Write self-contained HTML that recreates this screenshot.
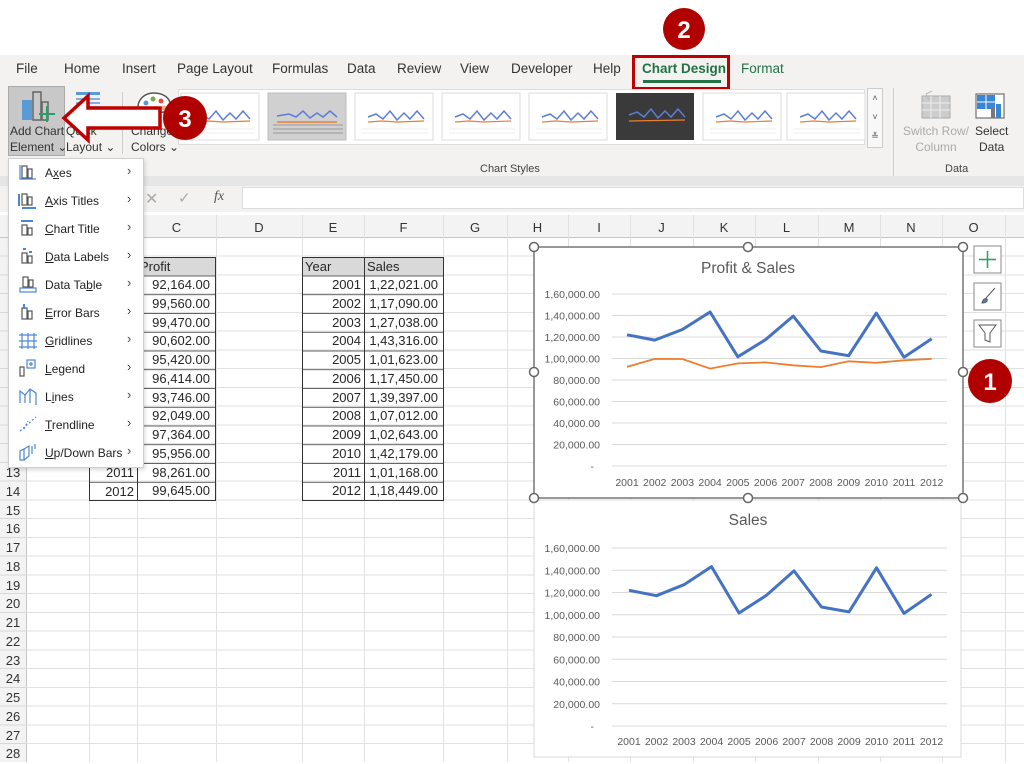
<!DOCTYPE html>
<html><head><meta charset="utf-8"><style>
*{margin:0;padding:0;box-sizing:border-box}
body{width:1024px;height:762px;overflow:hidden;background:#fff;font-family:"Liberation Sans",sans-serif;position:relative;font-size:13px;color:#262626}
.a{position:absolute}
.tab{position:absolute;top:61px;font-size:13.5px;color:#333}
.mi{position:absolute;left:45px;font-size:12px;color:#222}
.mi u{text-decoration:underline}
.ch{position:absolute;left:127px;font-size:13px;color:#444}
.hd{position:absolute;top:220px;font-size:13px;color:#333;text-align:center}
</style></head><body>
<div class="a" style="left:0;top:55px;width:1024px;height:123px;background:#f3f2f1"></div>
<div class="a" style="left:0;top:176px;width:1024px;height:10px;background:#e6e6e6"></div>
<div class="a" style="left:0;top:186px;width:1024px;height:26px;background:#f3f2f1"></div>
<div class="a" style="left:242px;top:187px;width:782px;height:22px;background:#fff;border:1px solid #ddd"></div>
<div class="a" style="left:145px;top:189px;font-size:16px;color:#aaa">✕</div>
<div class="a" style="left:178px;top:189px;font-size:15px;color:#aaa">✓</div>
<div class="a" style="left:214px;top:189px;font-size:14px;font-style:italic;font-family:'Liberation Serif',serif;color:#555">fx</div>
<div class="tab" style="left:16px">File</div>
<div class="tab" style="left:64px">Home</div>
<div class="tab" style="left:122px">Insert</div>
<div class="tab" style="left:177px">Page Layout</div>
<div class="tab" style="left:272px">Formulas</div>
<div class="tab" style="left:347px">Data</div>
<div class="tab" style="left:397px">Review</div>
<div class="tab" style="left:460px">View</div>
<div class="tab" style="left:511px">Developer</div>
<div class="tab" style="left:593px">Help</div>
<div class="tab" style="left:642px;color:#217346;font-weight:bold">Chart Design</div>
<div class="a" style="left:643px;top:80px;width:78px;height:3px;background:#217346"></div>
<div class="a" style="left:632px;top:55px;width:98px;height:35px;border:3px solid #c00000"></div>
<div class="tab" style="left:741px;color:#217346">Format</div>
<div class="a" style="left:8px;top:86px;width:57px;height:70px;background:#c8c8c8;border:1px solid #aaa"></div>
<svg class="a" style="left:20px;top:90px" width="36" height="34"><rect x="2" y="10" width="10" height="20" fill="#5b9bd5"/><rect x="13" y="2" width="8" height="28" fill="none" stroke="#666" stroke-width="1.5"/><rect x="22" y="12" width="6" height="18" fill="none" stroke="#666" stroke-width="1.5"/><path d="M27 16v16M19 24h16" stroke="#21a366" stroke-width="2"/></svg>
<div class="a" style="left:10px;top:123px;font-size:12px;line-height:16px;color:#333">Add Chart<br>Element ⌄</div>
<svg class="a" style="left:72px;top:90px" width="34" height="34"><rect x="4" y="2" width="24" height="3" fill="#5b9bd5"/><path d="M4 9h24M4 13h24M4 17h24M4 21h24M4 25h24M4 29h24" stroke="#5b9bd5" stroke-width="1.5"/><rect x="8" y="14" width="5" height="16" fill="#fff" stroke="#666"/><rect x="15" y="18" width="5" height="12" fill="#fff" stroke="#666"/></svg>
<div class="a" style="left:66px;top:123px;font-size:12px;line-height:16px;color:#333">Quick<br>Layout ⌄</div>
<div class="a" style="left:122px;top:92px;width:1px;height:62px;background:#ccc"></div>
<svg class="a" style="left:136px;top:90px" width="36" height="34"><path d="M18 3C8 3 2 10 2 17c0 8 8 13 14 13 3 0 4-2 3-4-1-3 2-5 5-4 5 1 10-2 10-8C34 8 27 3 18 3z" fill="#fff" stroke="#555" stroke-width="1.5"/><circle cx="10" cy="13" r="2.5" fill="#5b9bd5"/><circle cx="17" cy="9" r="2.5" fill="#70ad47"/><circle cx="25" cy="11" r="2.5" fill="#e84c3d"/><circle cx="28" cy="18" r="2.5" fill="#f4b183"/><circle cx="10" cy="21" r="2.5" fill="#7030a0"/></svg>
<div class="a" style="left:131px;top:123px;font-size:12px;line-height:16px;color:#333">Change<br>Colors ⌄</div>
<div class="a" style="left:178px;top:89px;width:687px;height:56px;background:#fff;border:1px solid #ddd"></div>
<svg class="a" style="left:178px;top:89px" width="690" height="56">
<g id="t"><rect x="3" y="4" width="78" height="47" fill="#fff" stroke="#ddd"/><polyline points="16,28 24,25 31,30 38,22 45,31 52,24 58,30 65,22 72,30" fill="none" stroke="#5b7fd6" stroke-width="1.5"/><polyline points="16,33 30,32 45,33 72,32" fill="none" stroke="#ed7d31" stroke-width="1.2"/><path d="M10 40h66M10 44h66" stroke="#eee"/></g>
<g transform="translate(87,0)"><rect x="3" y="4" width="78" height="47" fill="#d0d0d0" stroke="#bbb"/><path d="M8 36h70M8 40h70M8 44h70" stroke="#999"/><polyline points="12,27 24,25 31,28 38,22 45,29 52,24 58,28 65,22 72,28" fill="none" stroke="#5b7fd6" stroke-width="1.5"/><polyline points="12,33 72,33" stroke="#ed7d31" stroke-width="1.5"/></g>
<use href="#t" x="174"/><use href="#t" x="261"/><use href="#t" x="348"/>
<g transform="translate(435,0)"><rect x="3" y="4" width="78" height="47" fill="#3a3a3a"/><polyline points="16,26 24,23 31,28 38,20 45,29 52,22 58,28 65,20 72,28" fill="none" stroke="#5b7fd6" stroke-width="1.5"/><polyline points="16,32 72,31" stroke="#ed7d31" stroke-width="1.2"/></g>
<use href="#t" x="522"/><use href="#t" x="606"/>
</svg>
<div class="a" style="left:867px;top:88px;width:16px;height:60px;border:1px solid #ccc;background:#f8f8f8;font-size:9px;color:#555;text-align:center;line-height:19px">˄<br>˅<br>≚</div>
<div class="a" style="left:480px;top:163px;font-size:11px;color:#444">Chart Styles</div>
<div class="a" style="left:893px;top:88px;width:1px;height:88px;background:#ccc"></div>
<svg class="a" style="left:918px;top:90px" width="36" height="30"><rect x="4" y="6" width="28" height="22" fill="#ccc" stroke="#aaa"/><path d="M4 13h28M4 20h28M13 6v22M22 6v22" stroke="#eee"/><path d="M8 4l6-3M8 4l3 6" stroke="#bbb" fill="none"/></svg>
<div class="a" style="left:902px;top:123px;font-size:12px;line-height:16px;color:#aaa;text-align:center;width:68px">Switch Row/<br>Column</div>
<svg class="a" style="left:974px;top:92px" width="34" height="30"><rect x="2" y="2" width="28" height="24" fill="#fff" stroke="#555"/><rect x="3" y="3" width="18" height="14" fill="#3a86d6"/><path d="M3 10h18M12 3v14" stroke="#fff"/><rect x="17" y="16" width="4" height="10" fill="#777"/><rect x="22" y="12" width="5" height="14" fill="#3a86d6"/></svg>
<div class="a" style="left:975px;top:123px;font-size:12px;line-height:16px;color:#333;text-align:center">Select<br>Data</div>
<div class="a" style="left:945px;top:163px;font-size:11px;color:#444">Data</div>

<div class="a" style="left:0;top:212px;width:1024px;height:550px;background:#fff"></div>
<div class="a" style="left:0;top:215px;width:1024px;height:23px;background:#f3f3f3;border-bottom:1px solid #c6c6c6"></div>
<div class="a" style="left:0;top:238px;width:27px;height:524px;background:#f3f3f3;border-right:1px solid #c6c6c6"></div>
<div class="a" style="left:27px;top:238px;width:997px;height:524px;background:repeating-linear-gradient(to bottom,transparent 0,transparent 17.75px,#e1e1e1 17.75px,#e1e1e1 18.75px)"></div>
<div class="a" style="left:0;top:238px;width:27px;height:524px;background:repeating-linear-gradient(to bottom,transparent 0,transparent 17.75px,#d8d8d8 17.75px,#d8d8d8 18.75px)"></div>
<div class="a" style="left:89px;top:215px;width:1px;height:547px;background:#e1e1e1"></div>
<div class="a" style="left:137px;top:215px;width:1px;height:547px;background:#e1e1e1"></div>
<div class="a" style="left:216px;top:215px;width:1px;height:547px;background:#e1e1e1"></div>
<div class="a" style="left:302px;top:215px;width:1px;height:547px;background:#e1e1e1"></div>
<div class="a" style="left:364px;top:215px;width:1px;height:547px;background:#e1e1e1"></div>
<div class="a" style="left:443px;top:215px;width:1px;height:547px;background:#e1e1e1"></div>
<div class="a" style="left:507px;top:215px;width:1px;height:547px;background:#e1e1e1"></div>
<div class="a" style="left:568px;top:215px;width:1px;height:547px;background:#e1e1e1"></div>
<div class="a" style="left:630px;top:215px;width:1px;height:547px;background:#e1e1e1"></div>
<div class="a" style="left:693px;top:215px;width:1px;height:547px;background:#e1e1e1"></div>
<div class="a" style="left:755px;top:215px;width:1px;height:547px;background:#e1e1e1"></div>
<div class="a" style="left:818px;top:215px;width:1px;height:547px;background:#e1e1e1"></div>
<div class="a" style="left:880px;top:215px;width:1px;height:547px;background:#e1e1e1"></div>
<div class="a" style="left:942px;top:215px;width:1px;height:547px;background:#e1e1e1"></div>
<div class="a" style="left:1005px;top:215px;width:1px;height:547px;background:#e1e1e1"></div>
<div class="hd" style="left:137px;width:79px">C</div><div class="hd" style="left:216px;width:86px">D</div><div class="hd" style="left:302px;width:62px">E</div><div class="hd" style="left:364px;width:79px">F</div><div class="hd" style="left:443px;width:64px">G</div><div class="hd" style="left:507px;width:61px">H</div><div class="hd" style="left:568px;width:62px">I</div><div class="hd" style="left:630px;width:63px">J</div><div class="hd" style="left:693px;width:62px">K</div><div class="hd" style="left:755px;width:63px">L</div><div class="hd" style="left:818px;width:62px">M</div><div class="hd" style="left:880px;width:62px">N</div><div class="hd" style="left:942px;width:63px">O</div>
<div class="a" style="left:0;top:464px;width:26px;font-size:13px;color:#333;line-height:18.75px;text-align:center">13<br>14<br>15<br>16<br>17<br>18<br>19<br>20<br>21<br>22<br>23<br>24<br>25<br>26<br>27<br>28</div>

<svg class="a" style="left:0;top:0" width="1024" height="762">
<rect x="137" y="257" width="79" height="18.75" fill="#d9d9d9"/><rect x="302" y="257" width="141" height="18.75" fill="#d9d9d9"/>
<g stroke="#333" stroke-width="1" fill="none">
<rect x="89.5" y="257.5" width="126" height="243"/><path d="M137.5 257v244"/>
<rect x="302.5" y="257.5" width="141" height="243"/><path d="M364.5 257v244"/>
</g>
<g stroke="#333" stroke-width="0.8"><path d="M89 276h127M89 294.75h127M89 313.5h127M89 332.25h127M89 351h127M89 369.75h127M89 388.5h127M89 407.25h127M89 426h127M89 444.75h127M89 463.5h127M89 482.25h127"/>
<path d="M302 276h141M302 294.75h141M302 313.5h141M302 332.25h141M302 351h141M302 369.75h141M302 388.5h141M302 407.25h141M302 426h141M302 444.75h141M302 463.5h141M302 482.25h141"/></g>
</svg>
<div class="a" style="left:140px;top:257px;line-height:19px">Profit</div>
<div class="a" style="left:305px;top:257px;line-height:19px">Year</div>
<div class="a" style="left:367px;top:257px;line-height:19px">Sales</div>
<div class="a" style="left:137px;top:276px;width:78px;text-align:right;line-height:18.75px;padding-right:5px">92,164.00<br>99,560.00<br>99,470.00<br>90,602.00<br>95,420.00<br>96,414.00<br>93,746.00<br>92,049.00<br>97,364.00<br>95,956.00<br>98,261.00<br>99,645.00</div>
<div class="a" style="left:89px;top:464px;width:48px;text-align:right;line-height:18.75px;padding-right:3px">2011<br>2012</div>
<div class="a" style="left:302px;top:276px;width:62px;text-align:right;line-height:18.75px;padding-right:3px">2001<br>2002<br>2003<br>2004<br>2005<br>2006<br>2007<br>2008<br>2009<br>2010<br>2011<br>2012</div>
<div class="a" style="left:364px;top:276px;width:79px;text-align:right;line-height:18.75px;padding-right:5px">1,22,021.00<br>1,17,090.00<br>1,27,038.00<br>1,43,316.00<br>1,01,623.00<br>1,17,450.00<br>1,39,397.00<br>1,07,012.00<br>1,02,643.00<br>1,42,179.00<br>1,01,168.00<br>1,18,449.00</div>

<svg class="a" style="left:0;top:0" width="1024" height="762" font-family="Liberation Sans" >
<rect x="534" y="500" width="427" height="257" fill="#fff" stroke="#d9d9d9"/>
<rect x="534" y="247" width="429" height="251" fill="#fff" stroke="#777" stroke-width="1.5"/>
<g stroke="#d9d9d9"><path d="M612 294h335M612 315.5h335M612 337h335M612 358.5h335M612 380h335M612 401.5h335M612 423h335M612 444.5h335M612 466h335"/>
<path d="M612 548h335M612 570.25h335M612 592.5h335M612 614.75h335M612 637h335M612 659.25h335M612 681.5h335M612 703.75h335M612 726h335"/></g>
<text x="748" y="273" font-size="15.5" fill="#595959" text-anchor="middle">Profit &amp; Sales</text>
<text x="748" y="525" font-size="15.5" fill="#595959" text-anchor="middle">Sales</text>
<g font-size="10.5" fill="#595959" text-anchor="end">
<text x="600" y="298">1,60,000.00</text><text x="600" y="319.5">1,40,000.00</text><text x="600" y="341">1,20,000.00</text><text x="600" y="362.5">1,00,000.00</text><text x="600" y="384">80,000.00</text><text x="600" y="405.5">60,000.00</text><text x="600" y="427">40,000.00</text><text x="600" y="448.5">20,000.00</text><text x="594" y="470">-</text>
<text x="600" y="552">1,60,000.00</text><text x="600" y="574.25">1,40,000.00</text><text x="600" y="596.5">1,20,000.00</text><text x="600" y="618.75">1,00,000.00</text><text x="600" y="641">80,000.00</text><text x="600" y="663.25">60,000.00</text><text x="600" y="685.5">40,000.00</text><text x="600" y="707.75">20,000.00</text><text x="594" y="730">-</text>
</g>
<g font-size="10.5" fill="#595959" text-anchor="middle">
<text x="627" y="486">2001</text><text x="654.7" y="486">2002</text><text x="682.4" y="486">2003</text><text x="710.1" y="486">2004</text><text x="737.8" y="486">2005</text><text x="765.5" y="486">2006</text><text x="793.2" y="486">2007</text><text x="820.9" y="486">2008</text><text x="848.6" y="486">2009</text><text x="876.3" y="486">2010</text><text x="904" y="486">2011</text><text x="931.7" y="486">2012</text>
<text x="629" y="745">2001</text><text x="656.5" y="745">2002</text><text x="684" y="745">2003</text><text x="711.5" y="745">2004</text><text x="739" y="745">2005</text><text x="766.5" y="745">2006</text><text x="794" y="745">2007</text><text x="821.5" y="745">2008</text><text x="849" y="745">2009</text><text x="876.5" y="745">2010</text><text x="904" y="745">2011</text><text x="931.5" y="745">2012</text>
</g>
<polyline points="627,366.9 654.7,358.9 682.4,359 710.1,368.6 737.8,363.4 765.5,362.4 793.2,365.3 820.9,367.1 848.6,361.3 876.3,362.8 904,360.3 931.7,358.9" fill="none" stroke="#ed7d31" stroke-width="1.8"/>
<polyline points="627,334.8 654.7,340.1 682.4,329.5 710.1,312 737.8,356.8 765.5,339.7 793.2,316.1 820.9,351 848.6,355.7 876.3,313.1 904,357.2 931.7,338.7" fill="none" stroke="#4472c4" stroke-width="3" stroke-linejoin="round"/>
<polyline points="629,590.3 656.5,595.7 684,584.7 711.5,566.6 739,613 766.5,595.3 794,570.9 821.5,607 849,611.9 876.5,567.8 904,613.4 931.5,594.3" fill="none" stroke="#4472c4" stroke-width="3" stroke-linejoin="round"/>
<g fill="#fff" stroke="#666" stroke-width="1.5">
<circle cx="534" cy="247" r="4.5"/><circle cx="748" cy="247" r="4.5"/><circle cx="963" cy="247" r="4.5"/><circle cx="534" cy="372" r="4.5"/><circle cx="963" cy="372" r="4.5"/><circle cx="534" cy="498" r="4.5"/><circle cx="748" cy="498" r="4.5"/><circle cx="963" cy="498" r="4.5"/></g>
<g fill="#fff" stroke="#888"><rect x="974" y="246" width="27" height="27"/><rect x="974" y="283" width="27" height="27"/><rect x="974" y="320" width="27" height="27"/></g>
<path d="M987.5 251v17M979 259.5h17" stroke="#21a366" stroke-width="1.5"/>
<path d="M995 288l-9 10M982 303c1-4 3-5 5-4 1 2-1 4-5 4z" stroke="#555" fill="#4a86d6"/>
<path d="M979 325h17l-6 8v9l-5-2v-7z" fill="none" stroke="#555"/>
<circle cx="684" cy="29" r="21" fill="#b00000"/><text x="684" y="38" font-size="24" font-weight="bold" fill="#fff" text-anchor="middle">2</text>
<circle cx="990" cy="381" r="22" fill="#b00000"/><text x="990" y="390" font-size="24" font-weight="bold" fill="#fff" text-anchor="middle">1</text>
<path d="M64 118 L88 96 L88 108 L160 108 L160 128 L88 128 L88 140 Z" fill="#fff" stroke="#c00000" stroke-width="3.5" stroke-linejoin="miter"/>
<circle cx="185" cy="118" r="22" fill="#b00000"/><text x="185" y="127" font-size="24" font-weight="bold" fill="#fff" text-anchor="middle">3</text>
</svg>

<div class="a" style="left:8px;top:158px;width:136px;height:310px;background:#fff;border:1px solid #d0d0d0;box-shadow:1px 2px 4px rgba(0,0,0,.15)"></div>
<svg class="a" style="left:18px;top:163px" width="22" height="300" fill="none" stroke="#555" stroke-width="1.2">
<g><rect x="4" y="3" width="5" height="12"/><rect x="10" y="6" width="4" height="9"/><path d="M2 2v14h16" stroke="#4a86d6"/></g>
<g transform="translate(0,28)"><rect x="4" y="3" width="5" height="11"/><rect x="10" y="6" width="4" height="8"/><path d="M1 3v12M4 17h14" stroke="#4a86d6" stroke-width="2"/></g>
<g transform="translate(0,56)"><path d="M3 2h12" stroke="#4a86d6" stroke-width="2"/><rect x="4" y="6" width="5" height="10"/><rect x="10" y="9" width="4" height="7"/></g>
<g transform="translate(0,84)"><rect x="4" y="6" width="5" height="10"/><rect x="10" y="9" width="4" height="7"/><path d="M5 2h3M11 5h3" stroke="#4a86d6" stroke-width="2"/></g>
<g transform="translate(0,112)"><rect x="5" y="2" width="5" height="10"/><rect x="11" y="5" width="4" height="7"/><rect x="2" y="13" width="16" height="4" stroke="#4a86d6"/></g>
<g transform="translate(0,140)"><rect x="4" y="5" width="5" height="11"/><rect x="10" y="8" width="4" height="8"/><path d="M6 1v5" stroke="#4a86d6" stroke-width="2"/></g>
<g transform="translate(0,168)" stroke="#4a86d6"><path d="M1 4h18M1 10h18M1 16h18M4 2v16M10 2v16M16 2v16"/></g>
<g transform="translate(0,196)"><rect x="2" y="8" width="4" height="9"/><rect x="9" y="1" width="8" height="8" stroke="#4a86d6"/><path d="M13 3v4M11 5h4" stroke="#4a86d6"/></g>
<g transform="translate(0,224)" stroke="#4a86d6"><path d="M2 16V4l5 4 5-6 6 4v12M7 8v8M12 2v14"/></g>
<g transform="translate(0,252)" stroke="#4a86d6" stroke-dasharray="2 2"><path d="M2 16L18 2M6 14l4-8"/></g>
<g transform="translate(0,280)" stroke="#4a86d6"><path d="M2 8v9h4V6zM6 6l5-3v10l-5 4M14 3v8M17 1v5"/></g>
</svg>
<div class="mi" style="top:166px">A<u>x</u>es</div>
<div class="mi" style="top:194px"><u>A</u>xis Titles</div>
<div class="mi" style="top:222px"><u>C</u>hart Title</div>
<div class="mi" style="top:250px"><u>D</u>ata Labels</div>
<div class="mi" style="top:278px">Data Ta<u>b</u>le</div>
<div class="mi" style="top:306px"><u>E</u>rror Bars</div>
<div class="mi" style="top:334px"><u>G</u>ridlines</div>
<div class="mi" style="top:362px"><u>L</u>egend</div>
<div class="mi" style="top:390px">L<u>i</u>nes</div>
<div class="mi" style="top:418px"><u>T</u>rendline</div>
<div class="mi" style="top:446px"><u>U</u>p/Down Bars</div>
<div class="ch" style="top:163px">›</div><div class="ch" style="top:191px">›</div><div class="ch" style="top:219px">›</div><div class="ch" style="top:247px">›</div><div class="ch" style="top:275px">›</div><div class="ch" style="top:303px">›</div><div class="ch" style="top:331px">›</div><div class="ch" style="top:359px">›</div><div class="ch" style="top:387px">›</div><div class="ch" style="top:415px">›</div><div class="ch" style="top:443px">›</div>
</body></html>
